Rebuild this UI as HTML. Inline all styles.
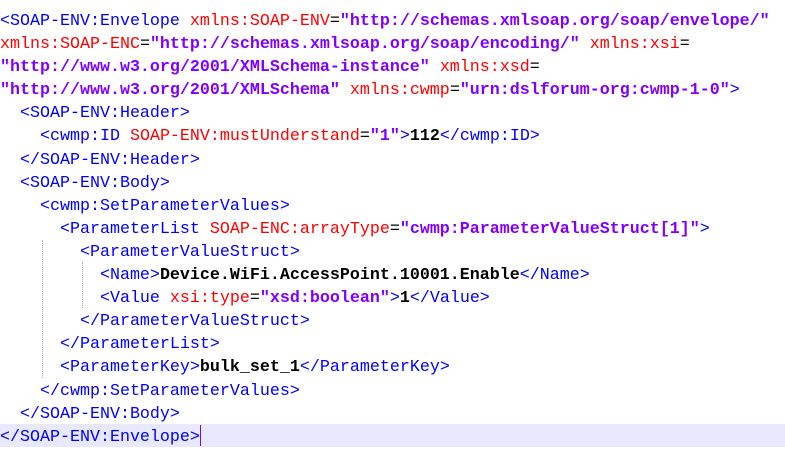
<!DOCTYPE html>
<html><head><meta charset="utf-8"><style>
html,body{margin:0;padding:0;background:#fff;width:785px;height:463px;overflow:hidden}
.c{position:absolute;left:0;top:10px;font-family:"Liberation Mono","Courier New",monospace;font-size:16.67px;line-height:23.1px;white-space:pre;color:#0000ff}
.l{height:23.1px}
.a{color:#ff0000}
.v{color:#8000ff;font-weight:bold}
.t{color:#000;font-weight:bold}
.k{color:#000}
.hl{position:absolute;left:0;top:424px;width:785px;height:23px;background:#e8e8ff}
.g{position:absolute;width:0;border-left:1px dotted #aaa}
.caret{position:absolute;left:200px;top:425px;width:1px;height:21px;background:#8000ff}
</style></head><body>
<div class="hl"></div>
<div class="g" style="left:42px;top:240px;height:138px"></div>
<div class="g" style="left:82px;top:262px;height:46px"></div>
<div class="c"><div class="l">&lt;SOAP-ENV:Envelope <span class="a">xmlns:SOAP-ENV</span><span class="k">=</span><span class="v">"http://schemas.xmlsoap.org/soap/envelope/"</span></div><div class="l"><span class="a">xmlns:SOAP-ENC</span><span class="k">=</span><span class="v">"http://schemas.xmlsoap.org/soap/encoding/"</span> <span class="a">xmlns:xsi</span><span class="k">=</span></div><div class="l"><span class="v">"http://www.w3.org/2001/XMLSchema-instance"</span> <span class="a">xmlns:xsd</span><span class="k">=</span></div><div class="l"><span class="v">"http://www.w3.org/2001/XMLSchema"</span> <span class="a">xmlns:cwmp</span><span class="k">=</span><span class="v">"urn:dslforum-org:cwmp-1-0"</span>&gt;</div><div class="l">  &lt;SOAP-ENV:Header&gt;</div><div class="l">    &lt;cwmp:ID <span class="a">SOAP-ENV:mustUnderstand</span><span class="k">=</span><span class="v">"1"</span>&gt;<span class="t">112</span>&lt;/cwmp:ID&gt;</div><div class="l">  &lt;/SOAP-ENV:Header&gt;</div><div class="l">  &lt;SOAP-ENV:Body&gt;</div><div class="l">    &lt;cwmp:SetParameterValues&gt;</div><div class="l">      &lt;ParameterList <span class="a">SOAP-ENC:arrayType</span><span class="k">=</span><span class="v">"cwmp:ParameterValueStruct[1]"</span>&gt;</div><div class="l">        &lt;ParameterValueStruct&gt;</div><div class="l">          &lt;Name&gt;<span class="t">Device.WiFi.AccessPoint.10001.Enable</span>&lt;/Name&gt;</div><div class="l">          &lt;Value <span class="a">xsi:type</span><span class="k">=</span><span class="v">"xsd:boolean"</span>&gt;<span class="t">1</span>&lt;/Value&gt;</div><div class="l">        &lt;/ParameterValueStruct&gt;</div><div class="l">      &lt;/ParameterList&gt;</div><div class="l">      &lt;ParameterKey&gt;<span class="t">bulk_set_1</span>&lt;/ParameterKey&gt;</div><div class="l">    &lt;/cwmp:SetParameterValues&gt;</div><div class="l">  &lt;/SOAP-ENV:Body&gt;</div><div class="l">&lt;/SOAP-ENV:Envelope&gt;</div></div>
<div class="caret"></div>
</body></html>
